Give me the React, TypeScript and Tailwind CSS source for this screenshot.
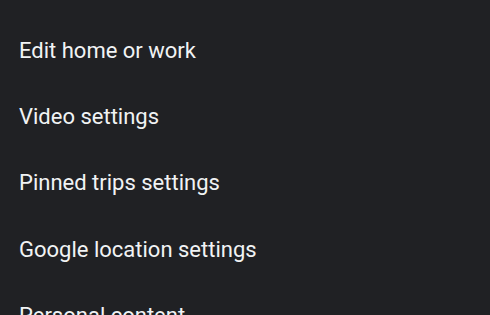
const items = [
  'Edit home or work',
  'Video settings',
  'Pinned trips settings',
  'Google location settings',
  'Personal content',
];

export default function App() {
  return (
    <div className="h-[315px] w-[490px] overflow-hidden bg-[#202124] pt-[17px] font-['Roboto',sans-serif]">
      {items.map((label) => (
        <div key={label} className="flex h-[66.3px] items-center px-[19px] text-[22px] text-[#f1f3f4]">
          {label}
        </div>
      ))}
    </div>
  );
}
